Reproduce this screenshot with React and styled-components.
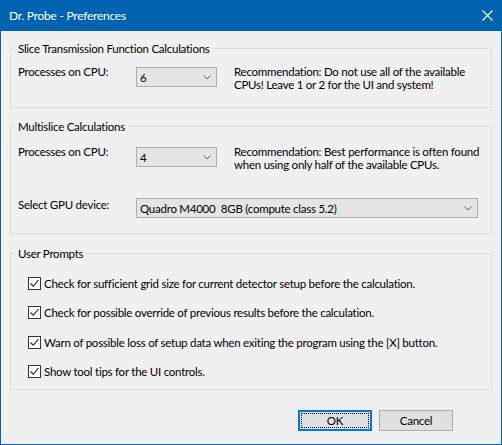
import styled, { createGlobalStyle } from 'styled-components';

const FONT = `"Lato", "Noto Sans", sans-serif`;

const GlobalStyle = createGlobalStyle`
  html, body {
    margin: 0;
    padding: 0;
    background: #fff;
  }
  body {
    font-family: ${FONT};
    font-size: 11.5px;
    letter-spacing: -0.25px;
    color: #000;
  }
`;

const CloseIcon = () => (
  <svg width="11" height="11" viewBox="0 0 11 11">
    <path d="M0.5 0.5 L10.5 10.5 M10.5 0.5 L0.5 10.5" stroke="#fff" strokeWidth="1.1" fill="none" />
  </svg>
);

const Chevron = () => (
  <svg width="8" height="5" viewBox="0 0 8 5">
    <path d="M0.5 0.5 L4 4 L7.5 0.5" stroke="#606060" strokeWidth="1" fill="none" />
  </svg>
);

const CheckMark = () => (
  <svg width="11" height="11" viewBox="0 0 11 11">
    <path d="M1.5 5.5 L4.2 8.2 L9.5 2.2" stroke="#333" strokeWidth="1.2" fill="none" />
  </svg>
);

const Select = ({ value, width, top }) => (
  <SelectBox $width={width} $top={top}>
    <span>{value}</span>
    <Chevron />
  </SelectBox>
);

const Check = ({ children }) => (
  <CheckRow>
    <Box>
      <CheckMark />
    </Box>
    <span>{children}</span>
  </CheckRow>
);

const App = () => {
  return (
    <>
      <GlobalStyle />
      <Window>
        <TitleBar>
          <Title>Dr. Probe - Preferences</Title>
          <CloseIcon />
        </TitleBar>

        <Content>
          <Group>
            <Legend>Slice Transmission Function Calculations</Legend>
            <GroupBody $pad="9px 7px 16px">
              <Row>
                <FieldLabel>Processes on CPU:</FieldLabel>
                <Select value="6" width={81} top={2} />
                <Hint>
                  Recommendation: Do not use all of the available<br />
                  CPUs! Leave 1 or 2 for the UI and system!
                </Hint>
              </Row>
            </GroupBody>
          </Group>

          <Group $top={11}>
            <Legend>Multislice Calculations</Legend>
            <GroupBody $pad="11px 7px 15px">
              <Row>
                <FieldLabel>Processes on CPU:</FieldLabel>
                <Select value="4" width={81} top={2} />
                <Hint>
                  Recommendation: Best performance is often found<br />
                  when using only half of the available CPUs.
                </Hint>
              </Row>
              <Row $top={27}>
                <FieldLabel>Select GPU device:</FieldLabel>
                <Select value={'Quadro M4000\u00a0\u00a08GB (compute class 5.2)'} width={342} />
              </Row>
            </GroupBody>
          </Group>

          <Group $top={12}>
            <Legend>User Prompts</Legend>
            <GroupBody $pad="15px 17px 10px">
              <Checks>
                <Check>Check for sufficient grid size for current detector setup before the calculation.</Check>
                <Check>Check for possible override of previous results before the calculation.</Check>
                <Check>Warn of possible loss of setup data when exiting the program using the [X] button.</Check>
                <Check>Show tool tips for the UI controls.</Check>
              </Checks>
            </GroupBody>
          </Group>

          <Footer>
            <Button $primary>OK</Button>
            <Button>Cancel</Button>
          </Footer>
        </Content>
      </Window>
    </>
  );
};

const Window = styled.div`
  width: 502px;
  height: 445px;
  box-sizing: border-box;
  border: 1px solid #0063b1;
  border-top: none;
  background: #f0f0f0;
  display: flex;
  flex-direction: column;
`;

const TitleBar = styled.div`
  height: 31px;
  flex-shrink: 0;
  background: #0063b1;
  display: flex;
  align-items: center;
  justify-content: space-between;
  padding: 0 9px 0 9px;
  margin: 0 -1px;
`;

const Title = styled.span`
  color: #fff;
  font-size: 12px;
  line-height: 15px;
`;

const Content = styled.div`
  padding: 10px 9px 0;
  display: flex;
  flex-direction: column;
`;

const Group = styled.fieldset`
  margin: ${p => p.$top || 0}px 0 0;
  padding: 0;
  min-width: 0;
  border: 1px solid #dcdcdc;
`;

const Legend = styled.legend`
  margin-left: 4px;
  padding: 0 3px;
  line-height: 15px;
`;

const GroupBody = styled.div`
  padding: ${p => p.$pad};
`;

const Row = styled.div`
  display: flex;
  align-items: flex-start;
  margin-top: ${p => p.$top || 0}px;
`;

const FieldLabel = styled.div`
  width: 118px;
  flex-shrink: 0;
  line-height: 13px;
`;

const SelectBox = styled.div`
  width: ${p => p.$width}px;
  height: 20px;
  margin-top: ${p => p.$top || 0}px;
  box-sizing: border-box;
  flex-shrink: 0;
  border: 1px solid #adadad;
  background: #e5e5e5;
  padding: 0 5px 0 3px;
  display: flex;
  align-items: center;
  justify-content: space-between;
  line-height: 13px;
  white-space: nowrap;
`;

const Hint = styled.div`
  margin-left: 17px;
  line-height: 13px;
  white-space: nowrap;
`;

const Checks = styled.div`
  display: flex;
  flex-direction: column;
  gap: 14.4px;
`;

const CheckRow = styled.div`
  display: flex;
  align-items: center;
  gap: 3px;
  height: 15px;
  white-space: nowrap;
`;

const Box = styled.span`
  width: 13px;
  height: 13px;
  box-sizing: border-box;
  border: 1px solid #333;
  background: #fff;
  display: flex;
  align-items: center;
  justify-content: center;
  flex-shrink: 0;
`;

const Footer = styled.div`
  display: flex;
  justify-content: flex-end;
  gap: 7px;
  margin-top: 20px;
  padding-right: 39px;
`;

const Button = styled.button`
  width: 74px;
  height: 21px;
  box-sizing: border-box;
  font-family: ${FONT};
  font-size: 11.5px;
  letter-spacing: -0.25px;
  color: #000;
  background: #e1e1e1;
  border: ${p => (p.$primary ? '2px solid #0078d7' : '1px solid #adadad')};
  outline: ${p => (p.$primary ? '1px dotted #000' : 'none')};
  outline-offset: -4px;
  padding: 0;
`;

export default App;
